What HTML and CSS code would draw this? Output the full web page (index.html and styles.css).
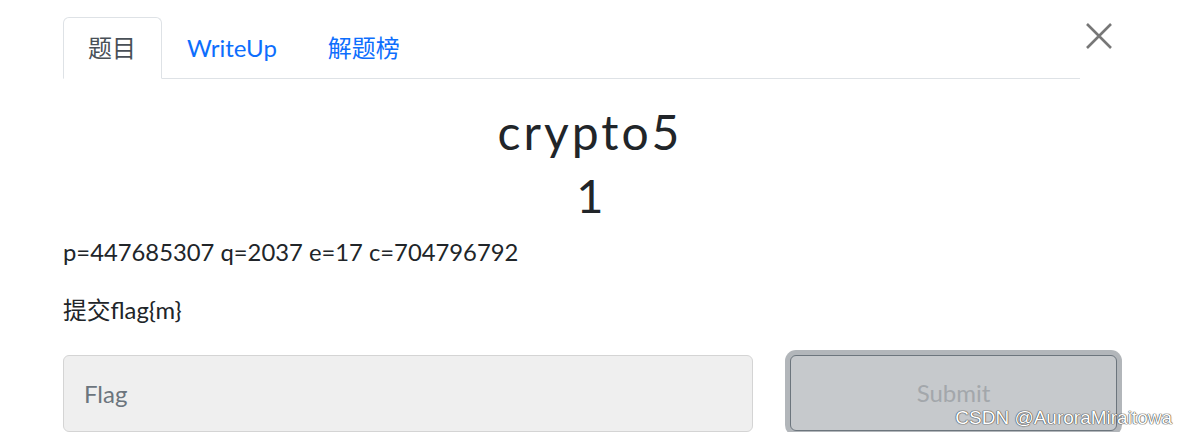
FILE: index.html
```html
<!DOCTYPE html>
<html lang="zh">
<head>
    <meta charset="UTF-8">
    <meta name="viewport" content="width=device-width, initial-scale=1.0">
    <title>crypto5</title>
    <link rel="stylesheet" href="styles.css">
</head>
<body>
    <div class="modal-body">
        <div class="top">
            <ul class="nav-tabs">
                <li class="nav-link active">题目</li>
                <li class="nav-link">WriteUp</li>
                <li class="nav-link">解题榜</li>
            </ul>
            <button class="close" type="button">
                <svg width="26" height="26" viewBox="0 0 26 26">
                    <path d="M1 1 L25 25 M25 1 L1 25" stroke="#777" stroke-width="2.6" fill="none"/>
                </svg>
            </button>
        </div>

        <h2 class="challenge-name">crypto5</h2>
        <h3 class="challenge-value">1</h3>

        <p class="desc">p=447685307 q=2037 e=17 c=704796792</p>
        <p class="desc">提交flag{m}</p>

        <div class="submit-row">
            <input class="form-control" type="text" placeholder="Flag">
            <div class="btn-wrap">
                <button class="btn-submit" type="button">Submit</button>
            </div>
        </div>
    </div>

    <div class="watermark">CSDN @AuroraMiraitowa</div>
</body>
</html>
```

FILE: styles.css
```css
body {
    margin: 0;
    font-family: Lato, "Noto Sans CJK SC", sans-serif;
    font-size: 24px;
    color: #212529;
    background: #fff;
    overflow: hidden;
}
.modal-body {
    width: 1054px;
    padding: 17px 0 0 63px;
}
.top {
    display: flex;
    align-items: flex-start;
}
.nav-tabs {
    flex: 1;
    display: flex;
    list-style: none;
    margin: 0;
    padding: 0;
    border-bottom: 1px solid #dee2e6;
}
.nav-link {
    padding: 12px 25px 12px 24px;
    line-height: 36px;
    color: #0d6efd;
    border: 1px solid transparent;
    border-radius: 6px 6px 0 0;
    margin-bottom: -1px;
}
.nav-link.active {
    color: #495057;
    border-color: #dee2e6 #dee2e6 #fff;
}
.close {
    width: 37px;
    padding: 6px 0 0 6px;
    border: none;
    background: none;
    text-align: left;
}
.close svg {
    display: block;
}
.challenge-name {
    margin: 0;
    padding-top: 24px;
    text-align: center;
    font-size: 48px;
    font-weight: 400;
    letter-spacing: 3px;
    line-height: 1.2;
}
.challenge-value {
    margin: 6px 0 11px;
    text-align: center;
    font-size: 47px;
    font-weight: 400;
    line-height: 1.2;
}
.desc {
    margin: 0 0 22px;
    font-size: 23.8px;
    line-height: 36px;
}
.submit-row {
    display: grid;
    grid-template-columns: 690px 327px;
    gap: 37px;
    margin-top: 27px;
}
.form-control {
    height: 77px;
    box-sizing: border-box;
    padding: 0 20px;
    font-family: Lato, sans-serif;
    font-size: 24px;
    background: #efefef;
    border: 1px solid #d4d4d4;
    border-radius: 6px;
}
.form-control::placeholder {
    color: #6c757d;
}
.btn-submit {
    width: 100%;
    height: 76px;
    font-family: Lato, sans-serif;
    font-size: 24px;
    color: #a3a7ab;
    background: #c6c9cc;
    border: 1px solid #6c757d;
    border-radius: 6px;
    box-shadow: 0 0 0 5px #b2b6ba;
}
.watermark {
    position: absolute;
    right: 13px;
    bottom: 6px;
    font-family: "Liberation Sans", Arial, sans-serif;
    font-size: 19px;
    color: #fff;
    text-shadow: 0 0 1px #444, 0 0 1px #444, 0 0 1px #444;
}
```
